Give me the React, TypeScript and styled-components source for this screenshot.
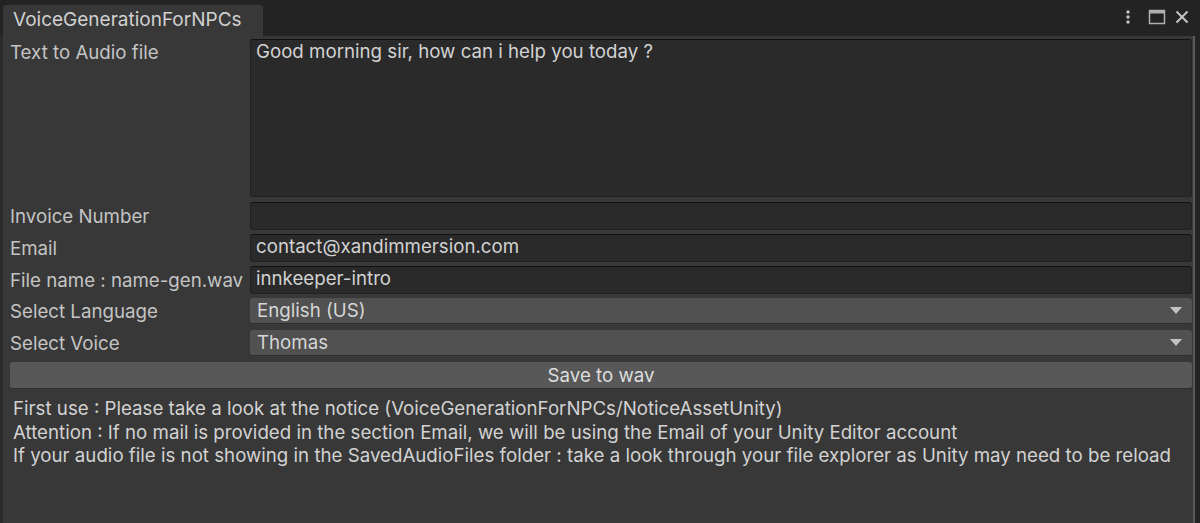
import styled, { createGlobalStyle } from "styled-components"

const GlobalStyle = createGlobalStyle`
    html, body {
        margin: 0;
        padding: 0;
        background: #232323;
    }
    * {
        box-sizing: border-box;
    }
`

const notes = [
    "First use : Please take a look at the notice (VoiceGenerationForNPCs/NoticeAssetUnity)",
    "Attention : If no mail is provided in the section Email, we will be using the Email of your Unity Editor account",
    "If your audio file is not showing in the SavedAudioFiles folder : take a look through your file explorer as Unity may need to be reload",
]

const Window = styled.div`
    width: 1200px;
    height: 523px;
    display: flex;
    flex-direction: column;
    background: #232323;
    font-family: Inter, "Noto Sans", sans-serif;
    font-size: 18.7px;
    color: #c4c4c4;
    overflow: hidden;
`
const TabBar = styled.div`
    height: 36px;
    display: flex;
    align-items: flex-end;
    padding-left: 3px;
    padding-right: 10px;
`
const Tab = styled.div`
    width: 260px;
    height: 31px;
    background: #383838;
    border-radius: 3px 3px 0 0;
    padding: 3px 0 0 10px;
    color: #d0d0d0;
    font-size: 19px;
    white-space: nowrap;
`
const TabIcons = styled.div`
    margin-left: auto;
    align-self: stretch;
    display: flex;
    align-items: center;
    padding-bottom: 2px;
`
const IconSlot = styled.span<{ $gap: number }>`
    display: flex;
    margin-left: ${p => p.$gap}px;
`
const Panel = styled.div`
    flex: 1;
    background: #383838;
    border-left: 3px solid #2b2b2b;
    border-right: 2px solid #5a5a5a;
    margin-right: 5px;
    padding: 3px 1px 0 7px;
`
const Row = styled.div<{ $gap: number }>`
    display: grid;
    grid-template-columns: 240px 1fr;
    margin-bottom: ${p => p.$gap}px;
`
const Label = styled.div<{ $top?: boolean }>`
    display: flex;
    align-items: ${p => (p.$top ? "flex-start" : "center")};
    padding-top: ${p => (p.$top ? "2px" : "0")};
    white-space: nowrap;
`
const Field = styled.div<{ $height: number }>`
    height: ${p => p.$height}px;
    background: #2a2a2a;
    border: 1px solid #212121;
    border-top-color: #121212;
    border-radius: 3px;
    padding: ${p => (p.$height > 40 ? "0 5px" : "0 5px 3px")};
    color: #d2d2d2;
    display: flex;
    align-items: ${p => (p.$height > 40 ? "flex-start" : "center")};
    white-space: nowrap;
`
const Dropdown = styled.div`
    height: 26px;
    background: #515151;
    border-radius: 3px;
    border-bottom: 1px solid #2e2e2e;
    padding: 0 10px 1px 7px;
    color: #d6d6d6;
    display: flex;
    align-items: center;
    justify-content: space-between;
`
const Arrow = styled.span`
    width: 0;
    height: 0;
    border-left: 6px solid transparent;
    border-right: 6px solid transparent;
    border-top: 7px solid #c4c4c4;
`
const SaveButton = styled.div`
    height: 27px;
    background: #585858;
    border-radius: 3px;
    border-bottom: 1px solid #2e2e2e;
    color: #dedede;
    display: flex;
    align-items: center;
    justify-content: center;
`
const Notes = styled.div`
    padding: 8px 0 0 3px;
    line-height: 23.5px;
    color: #d2d2d2;
    white-space: nowrap;
`

const MenuIcon = () => (
    <svg width="12" height="16" viewBox="0 0 12 16">
        <circle cx="6" cy="3" r="1.7" fill="#c4c4c4" />
        <circle cx="6" cy="8" r="1.7" fill="#c4c4c4" />
        <circle cx="6" cy="13" r="1.7" fill="#c4c4c4" />
    </svg>
)

const MaximizeIcon = () => (
    <svg width="18" height="16" viewBox="0 0 18 16">
        <rect x="1.5" y="1.5" width="15" height="13" fill="none" stroke="#b0b0b0" strokeWidth="1.5" />
        <rect x="1.5" y="1.5" width="15" height="3" fill="#b0b0b0" />
    </svg>
)

const CloseIcon = () => (
    <svg width="16" height="16" viewBox="0 0 16 16">
        <path d="M2.5 2.5 L13.5 13.5 M13.5 2.5 L2.5 13.5" stroke="#c4c4c4" strokeWidth="2" />
    </svg>
)

export default function App() {
    return (
        <>
            <GlobalStyle />
            <Window>
                <TabBar>
                    <Tab>VoiceGenerationForNPCs</Tab>
                    <TabIcons>
                        <IconSlot $gap={0}>
                            <MenuIcon />
                        </IconSlot>
                        <IconSlot $gap={14}>
                            <MaximizeIcon />
                        </IconSlot>
                        <IconSlot $gap={8}>
                            <CloseIcon />
                        </IconSlot>
                    </TabIcons>
                </TabBar>
                <Panel>
                    <Row $gap={5}>
                        <Label $top>Text to Audio file</Label>
                        <Field $height={158}>Good morning sir, how can i help you today ?</Field>
                    </Row>
                    <Row $gap={4}>
                        <Label>Invoice Number</Label>
                        <Field $height={28} />
                    </Row>
                    <Row $gap={4}>
                        <Label>Email</Label>
                        <Field $height={28}>contact@xandimmersion.com</Field>
                    </Row>
                    <Row $gap={4}>
                        <Label>File name : name-gen.wav</Label>
                        <Field $height={28}>innkeeper-intro</Field>
                    </Row>
                    <Row $gap={6}>
                        <Label>Select Language</Label>
                        <Dropdown>
                            English (US)
                            <Arrow />
                        </Dropdown>
                    </Row>
                    <Row $gap={6}>
                        <Label>Select Voice</Label>
                        <Dropdown>
                            Thomas
                            <Arrow />
                        </Dropdown>
                    </Row>
                    <SaveButton>Save to wav</SaveButton>
                    <Notes>
                        {notes.map(line => (
                            <div key={line}>{line}</div>
                        ))}
                    </Notes>
                </Panel>
            </Window>
        </>
    )
}
